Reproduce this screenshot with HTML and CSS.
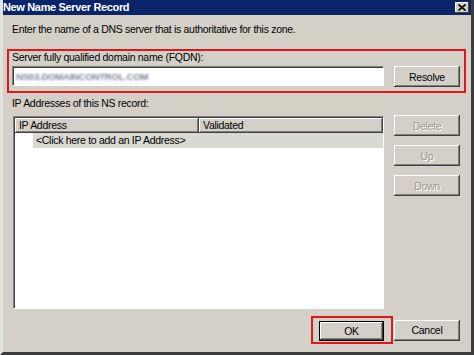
FILE: index.html
```html
<!DOCTYPE html>
<html lang="en">
<head>
    <meta charset="UTF-8">
    <title>New Name Server Record</title>
    <link rel="stylesheet" href="styles.css">
</head>
<body>

    <div class="window">
        <div class="titlebar">
            <span class="title">New Name Server Record</span>
            <div class="close-btn">
                <svg width="8" height="7" viewBox="0 0 8 7">
                    <path d="M0.5 0.5 L7.5 6.5 M7.5 0.5 L0.5 6.5" stroke="#000" stroke-width="1.6" fill="none"/>
                </svg>
            </div>
        </div>

        <div class="content">
            <p class="prompt">Enter the name of a DNS server that is authoritative for this zone.</p>

            <div class="highlight fqdn-box">
                <label class="field-label">Server fully qualified domain name (FQDN):</label>
                <div class="fqdn-row">
                    <div class="textbox"><span class="blurred">NS03.DOMAINCONTROL.COM</span></div>
                    <div class="btn">Resolve</div>
                </div>
            </div>

            <p class="section-label">IP Addresses of this NS record:</p>

            <div class="ip-area">
                <div class="listview">
                    <div class="list-header">
                        <div class="col col-ip">IP Address</div>
                        <div class="col col-valid">Validated</div>
                    </div>
                    <div class="list-row">&lt;Click here to add an IP Address&gt;</div>
                </div>
                <div class="side-buttons">
                    <div class="btn disabled">Delete</div>
                    <div class="btn disabled">Up</div>
                    <div class="btn disabled">Down</div>
                </div>
            </div>

            <div class="footer">
                <div class="highlight ok-box">
                    <div class="btn default">OK</div>
                </div>
                <div class="btn">Cancel</div>
            </div>
        </div>
    </div>

</body>
</html>
```

FILE: styles.css
```css
body {
    margin: 0;
    padding: 0;
    font-family: "Liberation Sans", Arial, sans-serif;
    font-size: 10.5px;
    letter-spacing: -0.3px;
    color: #000;
    background-color: #d4d0c8;
}

.window {
    width: 474px;
    height: 355px;
    box-sizing: border-box;
    background-color: #d4d0c8;
    border-left: 3px solid #e4e2dc;
    border-right: 3px solid #3c3c3c;
    border-bottom: 3px solid #3c3c3c;
    overflow: hidden;
}

/* title bar */
.titlebar {
    height: 15px;
    background-color: #0a246a;
    display: flex;
    justify-content: space-between;
    align-items: center;
    padding: 0 2px 0 0;
}

.title {
    color: #fff;
    font-weight: bold;
    font-size: 11px;
    letter-spacing: -0.35px;
    line-height: 15px;
}

.close-btn {
    width: 14px;
    height: 11px;
    box-sizing: border-box;
    background-color: #d4d0c8;
    box-shadow: inset -1px -1px #404040, inset 1px 1px #fff;
    display: flex;
    justify-content: center;
    align-items: center;
}

/* dialog body */
.prompt {
    margin: 8px 0 0 9px;
    line-height: 13px;
}

.highlight {
    border: 2px solid #e0161f;
    box-sizing: border-box;
}

.fqdn-box {
    margin: 13px 0 0 4px;
    width: 459px;
    height: 44px;
    padding: 0 0 0 3px;
}

.field-label {
    display: block;
    line-height: 13px;
}

.fqdn-row {
    display: flex;
    gap: 10px;
    margin-top: 2px;
}

.textbox {
    width: 372px;
    height: 20px;
    box-sizing: border-box;
    background-color: #fff;
    border-top: 1px solid #808080;
    border-left: 1px solid #808080;
    border-right: 1px solid #fff;
    border-bottom: 1px solid #fff;
    box-shadow: inset 1px 1px #404040;
    padding: 3px 0 0 3px;
    overflow: hidden;
}

.blurred {
    font-size: 9.5px;
    font-weight: bold;
    letter-spacing: -0.2px;
    color: #7c8498;
    filter: blur(1.3px);
    display: inline-block;
}

.btn {
    width: 66px;
    height: 21px;
    box-sizing: border-box;
    background-color: #d4d0c8;
    box-shadow: inset -1px -1px #404040, inset 1px 1px #fff, inset -2px -2px #808080;
    display: flex;
    justify-content: center;
    align-items: center;
}

.btn.disabled {
    color: #9a9890;
    text-shadow: 1px 1px #fff;
}

.btn.default {
    width: 65px;
    height: 20px;
    border: 1px solid #000;
}

.section-label {
    margin: 4px 0 0 9px;
    line-height: 13px;
}

/* ip address list */
.ip-area {
    display: flex;
    gap: 10px;
    margin: 6px 0 0 10px;
}

.listview {
    width: 371px;
    height: 193px;
    box-sizing: border-box;
    background-color: #fff;
    border-top: 1px solid #808080;
    border-left: 1px solid #808080;
    border-right: 1px solid #fff;
    border-bottom: 1px solid #fff;
    box-shadow: inset 1px 1px #404040;
    padding: 1px 0 0 1px;
}

.list-header {
    display: flex;
    height: 15px;
}

.col {
    box-sizing: border-box;
    background-color: #d4d0c8;
    box-shadow: inset -1px -1px #404040, inset 1px 1px #fff, inset -2px -2px #808080;
    line-height: 15px;
    padding-left: 4px;
}

.col-ip {
    width: 184px;
}

.col-valid {
    flex: 1;
}

.list-row {
    margin-left: 18px;
    height: 15px;
    line-height: 15px;
    padding-left: 3px;
    background-color: #dad8d2;
}

.side-buttons {
    display: flex;
    flex-direction: column;
    gap: 9px;
    margin-top: -1px;
}

/* footer */
.footer {
    display: flex;
    align-items: center;
    gap: 1px;
    margin: 7px 0 0 308px;
}

.ok-box {
    width: 82px;
    height: 28px;
    padding: 3px 0 0 6px;
}
```
